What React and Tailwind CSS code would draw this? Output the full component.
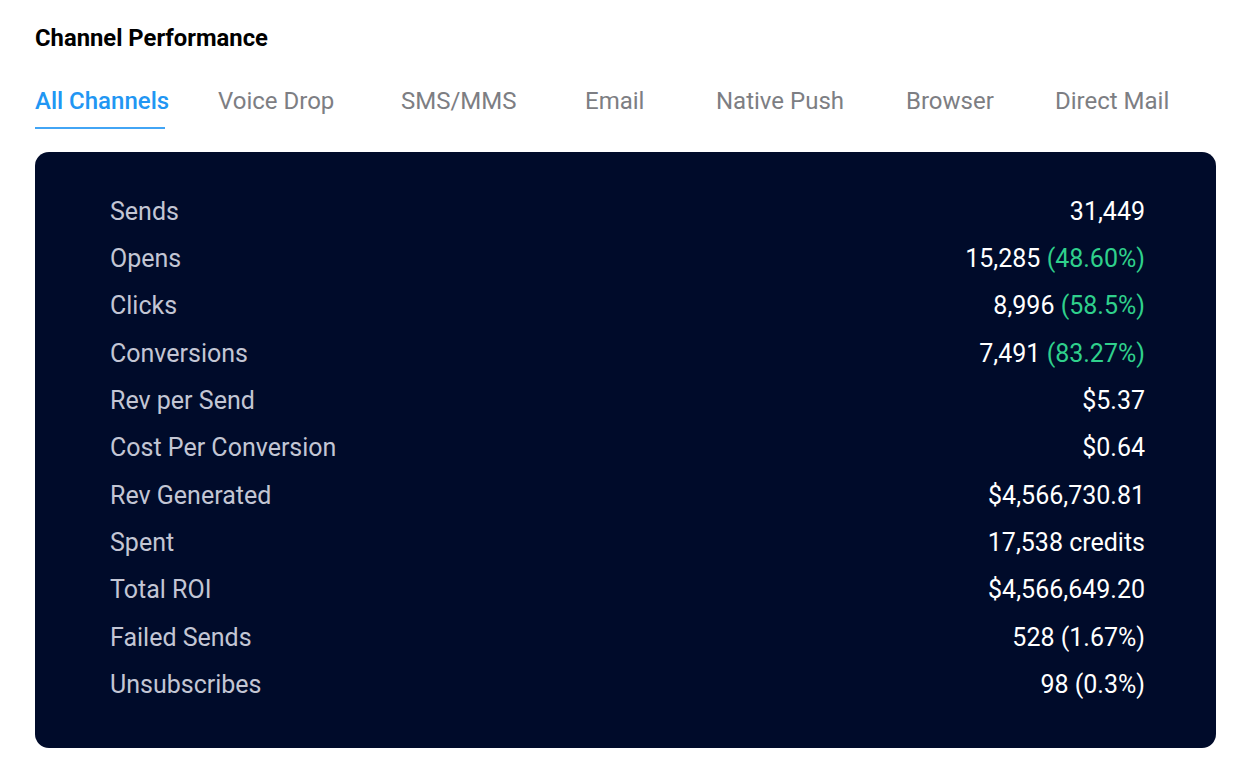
const tabs = [
  { name: "All Channels", cls: "w-[183px]" },
  { name: "Voice Drop", cls: "w-[183px]" },
  { name: "SMS/MMS", cls: "w-[184px]" },
  { name: "Email", cls: "w-[131px]" },
  { name: "Native Push", cls: "w-[190px]" },
  { name: "Browser", cls: "w-[149px]" },
  { name: "Direct Mail", cls: "" },
];

const rows = [
  { label: "Sends", value: "31,449" },
  { label: "Opens", value: "15,285", pct: "(48.60%)" },
  { label: "Clicks", value: "8,996", pct: "(58.5%)" },
  { label: "Conversions", value: "7,491", pct: "(83.27%)" },
  { label: "Rev per Send", value: "$5.37" },
  { label: "Cost Per Conversion", value: "$0.64" },
  { label: "Rev Generated", value: "$4,566,730.81" },
  { label: "Spent", value: "17,538 credits" },
  { label: "Total ROI", value: "$4,566,649.20" },
  { label: "Failed Sends", value: "528 (1.67%)" },
  { label: "Unsubscribes", value: "98 (0.3%)" },
];

export default function App() {
  return (
    <div className="min-h-screen bg-white px-[35px] pt-[24px] font-['Roboto',sans-serif]">
      <h2 className="text-[23.8px] font-bold leading-[28px] text-black">
        Channel Performance
      </h2>
      <div className="mt-[34px] flex items-start">
        {tabs.map((t, i) => (
          <div key={t.name} className={`flex shrink-0 flex-col ${t.cls}`}>
            <span
              className={
                i === 0
                  ? "text-[24px] font-medium leading-[30px] text-[#2196f3]"
                  : "text-[24px] leading-[30px] text-[#7d7e83]"
              }
            >
              {t.name}
            </span>
            {i === 0 ? (
              <div className="mt-[11px] h-[2px] w-[130px] bg-[#42a5f5]" />
            ) : null}
          </div>
        ))}
      </div>
      <div className="mt-[23px] w-[1181px] rounded-[14px] bg-[#000b2a] pl-[75px] pr-[71px] pt-[36px] pb-[40px]">
        {rows.map((r) => (
          <div
            key={r.label}
            className="flex h-[47.3px] items-center justify-between text-[25px]"
          >
            <span className="text-[#c3c6d4]">{r.label}</span>
            <span className="text-white">
              {r.value}
              {r.pct ? <span className="text-[#2fd08c]"> {r.pct}</span> : null}
            </span>
          </div>
        ))}
      </div>
    </div>
  );
}
